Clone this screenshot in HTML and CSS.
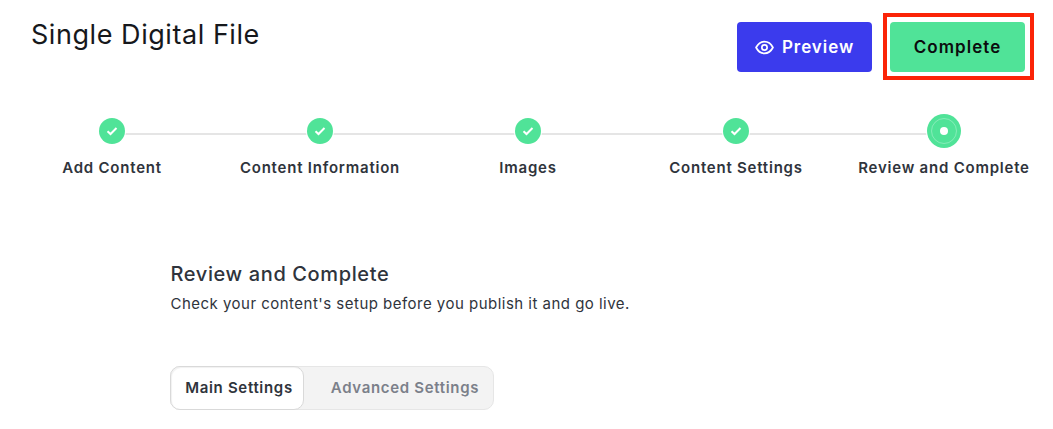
FILE: index.html
```html
<!DOCTYPE html>
<html lang="en">
<head>
<meta charset="utf-8">
<title>Single Digital File</title>
<link rel="stylesheet" href="styles.css">
</head>
<body>
<header class="top">
  <h1 class="title">Single Digital File</h1>
  <div class="actions">
    <button class="btn btn-preview">
      <svg class="eye" viewBox="0 0 20 16" width="19" height="15" fill="none" stroke="#fff" stroke-width="1.8"><path d="M1 8c2.200-4.200 5.200-6.300 9-6.300s6.800 2.100 9 6.300c-2.200 4.200-5.200 6.300-9 6.300S3.200 12.200 1 8z"/><circle cx="10" cy="8" r="2.800"/></svg>
      <span>Preview</span>
    </button>
    <div class="highlight"><button class="btn btn-complete">Complete</button></div>
  </div>
</header>
<ol class="steps">
  <li class="step"><span class="dot"><svg viewBox="0 0 12 10" width="12" height="10" fill="none" stroke="#fff" stroke-width="2"><path d="M1.500 5.200l3 2.800 6-6"/></svg></span><span class="label">Add Content</span></li>
  <li class="step"><span class="dot"><svg viewBox="0 0 12 10" width="12" height="10" fill="none" stroke="#fff" stroke-width="2"><path d="M1.500 5.200l3 2.800 6-6"/></svg></span><span class="label">Content Information</span></li>
  <li class="step"><span class="dot"><svg viewBox="0 0 12 10" width="12" height="10" fill="none" stroke="#fff" stroke-width="2"><path d="M1.500 5.200l3 2.800 6-6"/></svg></span><span class="label">Images</span></li>
  <li class="step"><span class="dot"><svg viewBox="0 0 12 10" width="12" height="10" fill="none" stroke="#fff" stroke-width="2"><path d="M1.500 5.200l3 2.800 6-6"/></svg></span><span class="label">Content Settings</span></li>
  <li class="step step-current"><span class="dot dot-current"><span class="ring"><span class="core"></span></span></span><span class="label">Review and Complete</span></li>
</ol>
<main class="content">
  <h2 class="heading">Review and Complete</h2>
  <p class="sub">Check your content's setup before you publish it and go live.</p>
  <div class="tabs">
    <div class="tab tab-active">Main Settings</div>
    <div class="tab tab-other">Advanced Settings</div>
  </div>
</main>
</body>
</html>
```
FILE: styles.css
```css
* { box-sizing: border-box; }
html, body { margin: 0; padding: 0; background: #fff; }
body {
  width: 1053px;
  height: 429px;
  overflow: hidden;
  font-family: Inter, "Open Sans", "Liberation Sans", sans-serif;
  color: #2f343c;
}
.top {
  display: flex;
  justify-content: space-between;
  align-items: flex-start;
  padding: 13px 19px 0 31px;
  height: 114px;
}
.title {
  margin: 6px 0 0;
  font-size: 27px;
  line-height: 32px;
  font-weight: 400;
  color: #16181c;
  letter-spacing: 0.55px;
}
.actions { display: flex; align-items: flex-start; gap: 11px; }
.btn {
  width: 135px;
  height: 50px;
  margin: 0;
  border: 0;
  border-radius: 4px;
  font-family: inherit;
  font-size: 17px;
  font-weight: 600;
  letter-spacing: 0.95px;
  display: flex;
  align-items: center;
  justify-content: center;
}
.btn-preview {
  margin-top: 9px;
  gap: 8px;
  background: #3b3bed;
  color: #fff;
}
.eye { display: block; }
.highlight {
  width: 151px;
  height: 67px;
  padding: 0 0 0 3px;
  border: 4px solid #fb2407;
  background: #fff;
  display: flex;
  justify-content: flex-start;
  align-items: center;
}
.btn-complete { background: #50e398; color: #0b0c0e; flex: none; letter-spacing: 1.05px; }
.steps {
  list-style: none;
  margin: 0;
  padding: 0 0 0 8px;
  display: grid;
  grid-template-columns: repeat(5, 208px);
  height: 74px;
}
.step {
  position: relative;
  display: flex;
  flex-direction: column;
  align-items: center;
}
.step:not(:last-child)::after {
  content: "";
  position: absolute;
  left: 50%;
  width: 208px;
  top: 19px;
  height: 2px;
  background: #e5e5e5;
}
.dot {
  position: relative;
  z-index: 1;
  width: 26px;
  height: 26px;
  margin-top: 4px;
  border-radius: 50%;
  background: #50e398;
  box-shadow: 0 0 0 1px #fff;
  display: flex;
  align-items: center;
  justify-content: center;
}
.dot-current {
  width: 34px;
  height: 34px;
  margin-top: 0;
}
.ring {
  width: 26px;
  height: 26px;
  border-radius: 50%;
  border: 1px solid rgba(255,255,255,.3);
  display: flex;
  align-items: center;
  justify-content: center;
}
.core { width: 8px; height: 8px; border-radius: 50%; background: #fff; }
.label {
  position: absolute;
  top: 44px;
  left: -20px;
  right: -20px;
  text-align: center;
  font-size: 15px;
  line-height: 20px;
  font-weight: 600;
  letter-spacing: 0.78px;
  white-space: nowrap;
}
.content { padding: 74px 0 0 170.500px; }
.heading {
  margin: 0;
  font-size: 20px;
  line-height: 24px;
  font-weight: 450;
  letter-spacing: 0.62px;
}
.sub {
  margin: 8px 0 0;
  font-size: 15px;
  line-height: 20px;
  font-weight: 400;
  letter-spacing: 0.48px;
}
.tabs {
  display: flex;
  width: 324px;
  height: 44px;
  margin: 52px 0 0 -0.500px;
  background: #f3f3f3;
  border: 1px solid #e6e6e6;
  border-radius: 10px;
}
.tab {
  display: flex;
  align-items: center;
  justify-content: center;
  padding-bottom: 2px;
  font-size: 15px;
  font-weight: 600;
  letter-spacing: 0.68px;
  color: #7b808a;
  flex: 1;
}
.tab-other { padding-left: 13px; }
.tab-active {
  flex: none;
  width: 134px;
  padding-left: 4px;
  background: #fff;
  border: 1px solid #d9d9d9;
  border-radius: 10px;
  box-shadow: inset 1px 1px 1px rgba(0,0,0,.06);
  color: #2f343c;
  margin: -1px 0 -1px -1px;
}
```
